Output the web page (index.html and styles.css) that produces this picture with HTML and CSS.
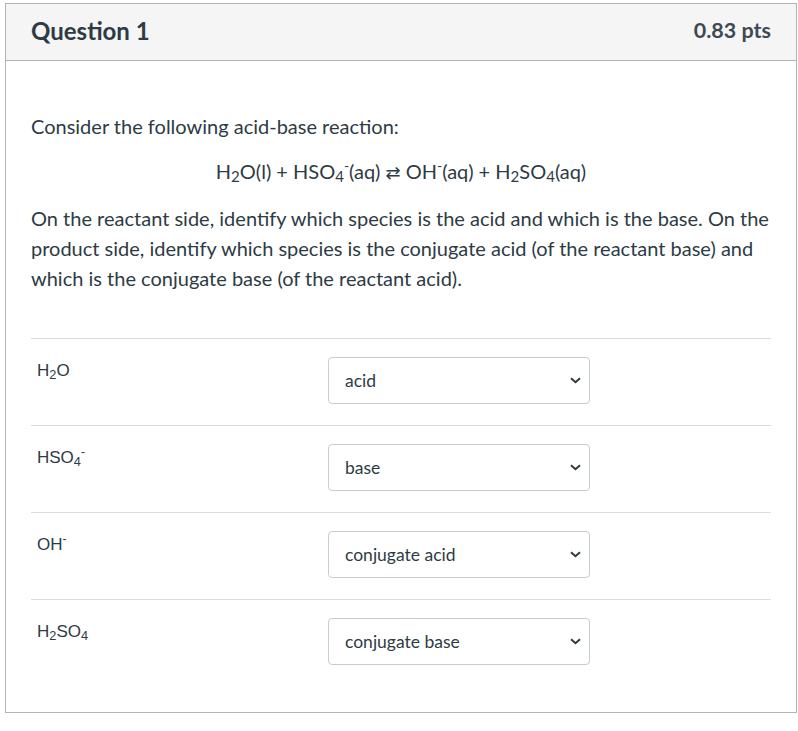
FILE: index.html
```html
<!DOCTYPE html>
<html>
<head>
<meta charset="utf-8">
<link rel="stylesheet" href="styles.css">
</head>
<body>
<div class="question">
  <div class="q-header">
    <h2 class="q-title">Question 1</h2>
    <div class="q-points">0.83 pts</div>
  </div>
  <div class="q-body">
    <p class="q-text">Consider the following acid-base reaction:</p>
    <p class="q-eq">H<sub>2</sub>O(l) + HSO<sub>4</sub><sup>-</sup>(aq) <span class="arrow">⇄</span> OH<sup>-</sup>(aq) + H<sub>2</sub>SO<sub>4</sub>(aq)</p>
    <p class="q-text">On the reactant side, identify which species is the acid and which is the base. On the product side, identify which species is the conjugate acid (of the reactant base) and which is the conjugate base (of the reactant acid).</p>
    <div class="answers">
      <div class="row">
        <div class="label">H<sub>2</sub>O</div>
        <div class="select"><span>acid</span><svg class="chev" width="11" height="7" viewBox="0 0 11 7"><path d="M1 1.2 L5.5 5.2 L10 1.2" fill="none" stroke="#2d3b45" stroke-width="2"/></svg></div>
      </div>
      <div class="row">
        <div class="label">HSO<sub>4</sub><sup>-</sup></div>
        <div class="select"><span>base</span><svg class="chev" width="11" height="7" viewBox="0 0 11 7"><path d="M1 1.2 L5.5 5.2 L10 1.2" fill="none" stroke="#2d3b45" stroke-width="2"/></svg></div>
      </div>
      <div class="row">
        <div class="label">OH<sup>-</sup></div>
        <div class="select"><span>conjugate acid</span><svg class="chev" width="11" height="7" viewBox="0 0 11 7"><path d="M1 1.2 L5.5 5.2 L10 1.2" fill="none" stroke="#2d3b45" stroke-width="2"/></svg></div>
      </div>
      <div class="row">
        <div class="label">H<sub>2</sub>SO<sub>4</sub></div>
        <div class="select"><span>conjugate base</span><svg class="chev" width="11" height="7" viewBox="0 0 11 7"><path d="M1 1.2 L5.5 5.2 L10 1.2" fill="none" stroke="#2d3b45" stroke-width="2"/></svg></div>
      </div>
    </div>
  </div>
</div>
</body>
</html>
```

FILE: styles.css
```css
html, body {
  margin: 0;
  padding: 0;
  background: #fff;
}
body {
  font-family: Lato, "Noto Sans", sans-serif;
  color: #2d3b45;
}
.question {
  margin: 3px 0 0 5px;
  width: 790px;
  border: 1px solid #b4b4b4;
}
.q-header {
  box-sizing: border-box;
  height: 57px;
  background: #f5f5f5;
  border-bottom: 1px solid #b4b4b4;
  display: flex;
  align-items: center;
  justify-content: space-between;
  padding: 0 25px 4px 25px;
}
.q-title {
  margin: 0;
  font-size: 24px;
  font-weight: 700;
}
.q-points {
  font-size: 21.5px;
  font-weight: 700;
  color: #3d4a54;
}
.q-body {
  padding: 50px 25px 26px 25px;
}
.q-text {
  margin: 0;
  font-size: 20px;
  line-height: 30px;
}
.q-eq {
  margin: 15px 0;
  font-size: 20px;
  line-height: 30px;
  text-align: center;
}
.q-eq sub, .label sub {
  font-size: 0.75em;
  vertical-align: -0.2em;
  line-height: 0;
}
.q-eq sup, .label sup {
  font-size: 0.7em;
  vertical-align: 0.6em;
  line-height: 0;
}
.arrow {
  font-family: "DejaVu Sans", sans-serif;
  font-size: 18px;
}
.answers {
  margin-top: 45px;
}
.row {
  border-top: 1px solid #dcdcdc;
  display: grid;
  grid-template-columns: 297px 262px;
  padding: 18px 0 21px 0;
}
.label {
  font-family: "Liberation Sans", Arial, sans-serif;
  font-size: 17px;
  padding: 5px 0 0 6px;
  line-height: 18px;
}
.select {
  box-sizing: border-box;
  height: 47px;
  border: 1px solid #c7cdd1;
  border-radius: 4px;
  display: flex;
  align-items: center;
  justify-content: space-between;
  padding: 0 8px 0 16px;
  font-size: 17.5px;
}
.chev {
  display: block;
}
```
